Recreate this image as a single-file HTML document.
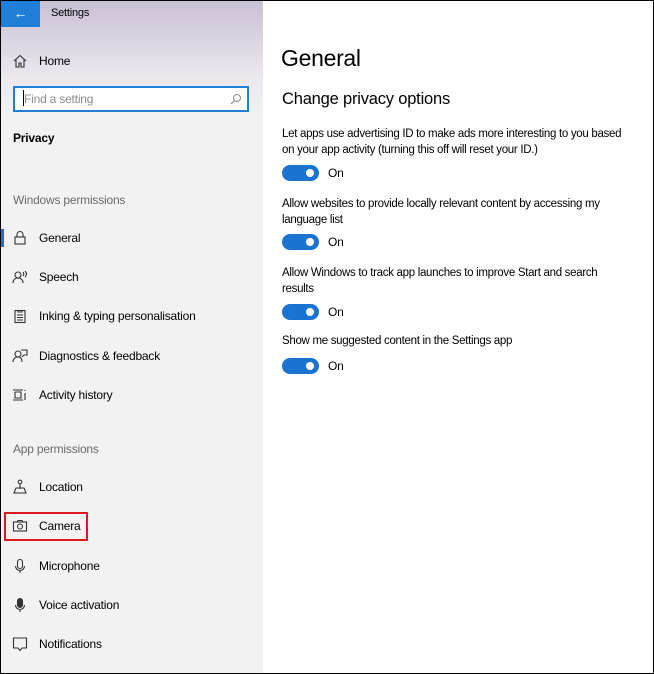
<!DOCTYPE html>
<html><head><meta charset="utf-8"><style>
*{margin:0;padding:0;box-sizing:border-box}
body{width:654px;height:674px;overflow:hidden;font-family:"Liberation Sans",sans-serif;background:#fff;position:relative;color:#000}
.frame{position:absolute;left:0;top:0;width:654px;height:674px;border:1px solid #000;pointer-events:none;z-index:10}
.side{position:absolute;left:0;top:0;width:263px;height:674px;background:linear-gradient(#c9c0d3 0px,#ddd6e3 45px,#ece9ef 80px,#f2f2f2 120px,#f2f2f2 100%)}
.back{position:absolute;left:1px;top:1px;width:39px;height:26px;background:#1f7fd6;color:#fff;font-size:14px;text-align:center;line-height:24px}
.t{position:absolute;font-size:12px;letter-spacing:-0.2px;white-space:nowrap}
.r{font-size:11.5px;letter-spacing:-0.3px}
.g{color:#6b6b6b}
.search{position:absolute;left:13px;top:86px;width:236px;height:26px;border:2px solid #1f7fd6;background:#fff}
.ico{position:absolute;left:12px;width:16px;height:16px}
.tog{position:absolute;left:282px;width:37px;height:16px;border-radius:8px;background:#1a73d0}
.tog:after{content:"";position:absolute;right:5px;top:4px;width:8px;height:8px;border-radius:50%;background:#fff}
.sel{position:absolute;left:1px;top:229px;width:3px;height:18px;background:#1a73d0}
.cam{position:absolute;left:4px;top:512px;width:84px;height:29px;border:2px solid #e0181e}
</style></head><body>
<div class="side"></div>
<div class="back">&#8592;</div>
<div class="t" style="left:51px;top:7px;font-size:11px">Settings</div>
<svg class="ico" style="top:53px" viewBox="0 0 16 16" fill="none" stroke="#333" stroke-width="1.1"><path d="M2 8L8 2.5 14 8M4 6.5V14h3v-4h2v4h3V6.5"/></svg>
<div class="t" style="left:39px;top:54px">Home</div>
<div class="search"><div style="position:absolute;left:8px;top:2px;width:1px;height:16px;background:#000"></div><div class="t g" style="left:9px;top:4px;color:#8a8a8a">Find a setting</div>
<svg style="position:absolute;right:5px;top:5px" width="12" height="12" viewBox="0 0 12 12" fill="none" stroke="#888"><circle cx="7" cy="5" r="3.5"/><path d="M4.5 7.5L1 11"/></svg></div>
<div class="t" style="left:13px;top:131px;font-weight:bold;font-size:12px">Privacy</div>
<div class="t g" style="left:13px;top:193px">Windows permissions</div>
<div class="sel"></div>
<svg class="ico" style="top:230px" viewBox="0 0 16 16" fill="none" stroke="#333" stroke-width="1.1"><rect x="3" y="7" width="10" height="7"/><path d="M5 7V4.5a3 3 0 016 0V7"/></svg>
<div class="t" style="left:39px;top:231px">General</div>
<svg class="ico" style="top:269px" viewBox="0 0 16 16" fill="none" stroke="#333" stroke-width="1.1"><circle cx="6" cy="6" r="3"/><path d="M1 14c0-3 2-5 5-5s5 2 5 5M11 3c1 1 1 3 0 4M13 2c2 2 2 4 0 6"/></svg>
<div class="t" style="left:39px;top:270px">Speech</div>
<svg class="ico" style="top:308px" viewBox="0 0 16 16" fill="none" stroke="#333" stroke-width="1.1"><rect x="3" y="2.5" width="10" height="12"/><path d="M6 2v2h4V2M5 7h6M5 9.5h6M5 12h6"/></svg>
<div class="t" style="left:39px;top:309px">Inking &amp; typing personalisation</div>
<svg class="ico" style="top:348px" viewBox="0 0 16 16" fill="none" stroke="#333" stroke-width="1.1"><circle cx="6" cy="6" r="3"/><path d="M1 14c0-3 2-5 5-5s4 2 4 5M9 2h6v5h-3l-2 2"/></svg>
<div class="t" style="left:39px;top:349px">Diagnostics &amp; feedback</div>
<svg class="ico" style="top:387px" viewBox="0 0 16 16" fill="none" stroke="#333" stroke-width="1.1"><path d="M1 3h10M1 13h10M3 5v6h6V5H3M13 3v1M13 6v7"/></svg>
<div class="t" style="left:39px;top:388px">Activity history</div>
<div class="t g" style="left:13px;top:442px">App permissions</div>
<svg class="ico" style="top:479px" viewBox="0 0 16 16" fill="none" stroke="#333" stroke-width="1.1"><circle cx="8" cy="3" r="1.8"/><path d="M8 5v5M4 9h8l2 5H2z"/></svg>
<div class="t" style="left:39px;top:480px">Location</div>
<div class="cam"></div>
<svg class="ico" style="top:518px" viewBox="0 0 16 16" fill="none" stroke="#333" stroke-width="1.1"><rect x="1.5" y="4" width="13" height="9"/><circle cx="8" cy="8.5" r="2.5"/><path d="M5 4l1-1.5h4L11 4"/></svg>
<div class="t" style="left:39px;top:519px">Camera</div>
<svg class="ico" style="top:558px" viewBox="0 0 16 16" fill="none" stroke="#333" stroke-width="1.1"><rect x="5.5" y="1.5" width="5" height="9" rx="2.5"/><path d="M3.5 8a4.5 4.5 0 009 0M8 12.5V15"/></svg>
<div class="t" style="left:39px;top:559px">Microphone</div>
<svg class="ico" style="top:597px" viewBox="0 0 16 16" stroke="#333" stroke-width="1.1"><rect x="5.5" y="1.5" width="5" height="9" rx="2.5" fill="#333"/><path d="M3.5 8a4.5 4.5 0 009 0M8 12.5V15" fill="none"/></svg>
<div class="t" style="left:39px;top:598px">Voice activation</div>
<svg class="ico" style="top:636px" viewBox="0 0 16 16" fill="none" stroke="#333" stroke-width="1.1"><path d="M1.5 2h13v10H10l-2 2.5L6 12H1.5z"/></svg>
<div class="t" style="left:39px;top:637px">Notifications</div>

<div class="t" style="left:281px;top:45px;font-size:23px;letter-spacing:-0.3px">General</div>
<div class="t" style="left:282px;top:90px;font-size:16.5px;letter-spacing:-0.2px">Change privacy options</div>
<div class="t r" style="left:282px;top:126px;line-height:16px">Let apps use advertising ID to make ads more interesting to you based<br>on your app activity (turning this off will reset your ID.)</div>
<div class="tog" style="top:165px"></div><div class="t" style="left:328px;top:166px">On</div>
<div class="t r" style="left:282px;top:196px;line-height:16px">Allow websites to provide locally relevant content by accessing my<br>language list</div>
<div class="tog" style="top:234px"></div><div class="t" style="left:328px;top:235px">On</div>
<div class="t r" style="left:282px;top:265px;line-height:16px">Allow Windows to track app launches to improve Start and search<br>results</div>
<div class="tog" style="top:304px"></div><div class="t" style="left:328px;top:305px">On</div>
<div class="t r" style="left:282px;top:335px">Show me suggested content in the Settings app</div>
<div class="tog" style="top:358px"></div><div class="t" style="left:328px;top:359px">On</div>
<div class="frame"></div>
</body></html>
